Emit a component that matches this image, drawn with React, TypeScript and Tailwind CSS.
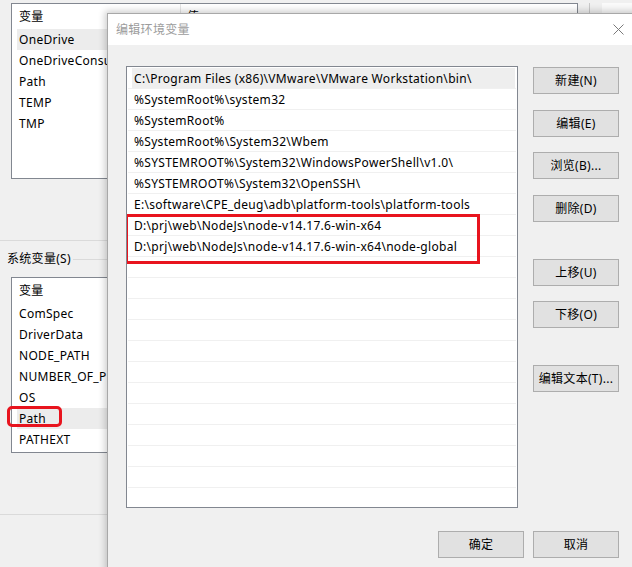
import React from "react";

const userVars = ["OneDrive", "OneDriveConsumer", "Path", "TEMP", "TMP"];
const sysVars = ["ComSpec", "DriverData", "NODE_PATH", "NUMBER_OF_PROCESSORS", "OS", "Path", "PATHEXT"];

const paths = [
  "C:\\Program Files (x86)\\VMware\\VMware Workstation\\bin\\",
  "%SystemRoot%\\system32",
  "%SystemRoot%",
  "%SystemRoot%\\System32\\Wbem",
  "%SYSTEMROOT%\\System32\\WindowsPowerShell\\v1.0\\",
  "%SYSTEMROOT%\\System32\\OpenSSH\\",
  "E:\\software\\CPE_deug\\adb\\platform-tools\\platform-tools",
  "D:\\prj\\web\\NodeJs\\node-v14.17.6-win-x64",
  "D:\\prj\\web\\NodeJs\\node-v14.17.6-win-x64\\node-global",
];

const btn =
  "w-[86px] h-[27px] flex items-center justify-center bg-[#e1e1e1] border border-[#adadad] text-[12px] text-black";

function VarList({ items, active }: { items: string[]; active: number }) {
  return (
    <div className="w-[567px] h-[176px] border border-[#828790] bg-white overflow-hidden">
      <div className="flex h-[25px]">
        <div className="w-[169px] border-r border-[#e5e5e5] flex items-center pl-[7px]">变量</div>
        <div className="flex items-center pl-[6px]">值</div>
      </div>
      {items.map((v, i) => (
        <div key={v + i} className="h-[21px] pl-[5px] flex">
          <div className={"w-[164px] flex items-center pl-[2px] whitespace-nowrap overflow-hidden " + (i === active ? "bg-[#ececec]" : "")}>
            {v}
          </div>
        </div>
      ))}
    </div>
  );
}

export default function App() {
  const rows = Array.from({ length: 21 }, (_, i) => paths[i] ?? "");
  return (
    <div className="relative w-[632px] h-[567px] overflow-hidden bg-[#f0f0f0] text-[12px] tracking-[0.3px] text-black font-['Noto_Sans','Noto_Sans_CJK_SC',sans-serif]">
      {/* background window: 环境变量 */}
      <div className="pt-[3px]">
        <div className="flex">
          <div className="ml-[11px]">
            <VarList items={userVars} active={0} />
          </div>
          <div className="w-[11px]" />
          <div className="w-[13px] h-[176px] border-l border-[#c8c8c8]" />
          <div className="flex-1 h-[176px] bg-[#fafafa]" />
        </div>
        <div className="mt-[61px] border-t border-[#dadada]" />
        <div className="h-[36px] flex items-center">
          <span className="pl-[7px] pr-[2px]">系统变量(S)</span>
          <div className="flex-1 border-t border-[#dadada]" />
        </div>
        <div className="relative ml-[11px]">
          <VarList items={sysVars} active={5} />
          <div className="absolute left-[-4px] top-[129px] w-[55px] h-[21px] border-[3px] border-[#e8141e] rounded-[5px]" />
        </div>
        <div className="mt-[61px] border-t border-[#dadada]" />
      </div>

      {/* dialog: 编辑环境变量 */}
      <div className="absolute left-[107px] top-[13px] w-[600px] h-[600px] border border-[#a8a8a8] bg-[#f0f0f0] shadow-[0_0_7px_2px_rgba(0,0,0,0.2)]">
        <div className="h-[31px] bg-white flex items-center">
          <span className="pl-[8px] w-[505px] text-[#9c9c9c]">编辑环境变量</span>
          <svg width="11" height="11" viewBox="0 0 11 11" className="text-[#7a7a7a]">
            <path d="M0.5 0.5 L10.5 10.5 M10.5 0.5 L0.5 10.5" stroke="currentColor" strokeWidth="1" fill="none" />
          </svg>
        </div>
        <div className="pl-[18px] pt-[21px]">
          <div className="flex gap-[15px]">
            <div className="relative w-[392px] h-[442px] border border-[#828790] bg-white overflow-hidden pt-[1px]">
              {rows.map((p, i) => (
                <div key={i} className="h-[21px] mx-[1px] border-b border-[#f0f0f0] flex">
                  <div className={"flex-1 flex items-center pt-[2px] whitespace-nowrap " + (i === 0 ? "ml-[4px] mr-[1px] pl-[2px] bg-[#eeeeee]" : "pl-[6px]")}>
                    {p}
                  </div>
                </div>
              ))}
              <div className="absolute left-[-2px] top-[147px] w-[355px] h-[50px] border-[3px] border-[#e8141e]" />
            </div>
            <div className="flex flex-col pt-[1px]">
              <div className={btn}>新建(N)</div>
              <div className={btn + " mt-[16px]"}>编辑(E)</div>
              <div className={btn + " mt-[15px]"}>浏览(B)...</div>
              <div className={btn + " mt-[16px]"}>删除(D)</div>
              <div className={btn + " mt-[37px]"}>上移(U)</div>
              <div className={btn + " mt-[15px]"}>下移(O)</div>
              <div className={btn + " mt-[37px]"}>编辑文本(T)...</div>
            </div>
          </div>
          <div className="w-[493px] flex justify-end gap-[9px] mt-[23px]">
            <div className={btn}>确定</div>
            <div className={btn}>取消</div>
          </div>
        </div>
      </div>
    </div>
  );
}
